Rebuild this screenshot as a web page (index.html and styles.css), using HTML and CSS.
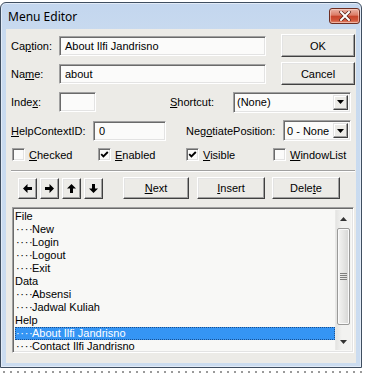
FILE: index.html
```html
<!DOCTYPE html>
<html>
<head>
<meta charset="utf-8">
<link rel="stylesheet" href="styles.css">
</head>
<body>
<div class="win">
  <div class="titlebar">
    <span class="title">Menu Editor</span>
    <span class="close"><svg width="12" height="10" viewBox="0 0 12 10"><path d="M2 1 L10 9 M10 1 L2 9" stroke="#5a2216" stroke-width="3.4" stroke-linecap="square"/><path d="M2 1 L10 9 M10 1 L2 9" stroke="#fff" stroke-width="2" stroke-linecap="square"/></svg></span>
  </div>
  <div class="client">
    <div class="row r1">
      <span class="lbl w53">Ca<u>p</u>tion:</span>
      <div class="tb tb-long">About Ilfi Jandrisno</div>
      <div class="btn btn-side">OK</div>
    </div>
    <div class="row r2">
      <span class="lbl w53">Na<u>m</u>e:</span>
      <div class="tb tb-long">about</div>
      <div class="btn btn-side">Cancel</div>
    </div>
    <div class="row r3">
      <span class="lbl w53">Inde<u>x</u>:</span>
      <div class="tb tb-index"></div>
      <span class="lbl shortcut-lbl"><u>S</u>hortcut:</span>
      <div class="combo combo-short"><span class="combo-text">(None)</span><span class="drop"><svg width="7" height="4" viewBox="0 0 7 4"><path d="M0 0 H7 L3.5 4 Z" fill="#000"/></svg></span></div>
    </div>
    <div class="row r4">
      <span class="lbl w87"><u>H</u>elpContextID:</span>
      <div class="tb tb-help">0</div>
      <span class="lbl neg-lbl">Neg<u>o</u>tiatePosition:</span>
      <div class="combo combo-neg"><span class="combo-text">0 - None</span><span class="drop"><svg width="7" height="4" viewBox="0 0 7 4"><path d="M0 0 H7 L3.5 4 Z" fill="#000"/></svg></span></div>
    </div>
    <div class="row r5">
      <label class="chk g1"><span class="box"></span><span><u>C</u>hecked</span></label>
      <label class="chk g2"><span class="box"><svg width="9" height="9" viewBox="0 0 9 9"><path d="M1.2 4.2 L3.4 6.4 L7.8 2" stroke="#000" stroke-width="1.9" fill="none"/></svg></span><span><u>E</u>nabled</span></label>
      <label class="chk g3"><span class="box"><svg width="9" height="9" viewBox="0 0 9 9"><path d="M1.2 4.2 L3.4 6.4 L7.8 2" stroke="#000" stroke-width="1.9" fill="none"/></svg></span><span><u>V</u>isible</span></label>
      <label class="chk g4"><span class="box"></span><span><u>W</u>indowList</span></label>
    </div>
    <div class="sep"></div>
    <div class="row r6">
      <div class="btn abtn"><svg width="9" height="9" viewBox="0 0 9 9"><path d="M0 4.5 L4.5 0 V3 H9 V6 H4.5 V9 Z" fill="#000"/></svg></div>
      <div class="btn abtn"><svg width="9" height="9" viewBox="0 0 9 9"><path d="M9 4.5 L4.5 0 V3 H0 V6 H4.5 V9 Z" fill="#000"/></svg></div>
      <div class="btn abtn"><svg width="9" height="9" viewBox="0 0 9 9"><path d="M4.5 0 L0 4.5 H3 V9 H6 V4.5 H9 Z" fill="#000"/></svg></div>
      <div class="btn abtn"><svg width="9" height="9" viewBox="0 0 9 9"><path d="M4.5 9 L0 4.5 H3 V0 H6 V4.5 H9 Z" fill="#000"/></svg></div>
      <div class="btn btn-next"><u>N</u>ext</div>
      <div class="btn btn-ins"><u>I</u>nsert</div>
      <div class="btn btn-del">Dele<u>t</u>e</div>
    </div>
    <div class="list">
      <div class="items">
        <div class="item">File</div>
        <div class="item"><span class="ind">····</span><span>New</span></div>
        <div class="item"><span class="ind">····</span><span>Login</span></div>
        <div class="item"><span class="ind">····</span><span>Logout</span></div>
        <div class="item"><span class="ind">····</span><span>Exit</span></div>
        <div class="item">Data</div>
        <div class="item"><span class="ind">····</span><span>Absensi</span></div>
        <div class="item"><span class="ind">····</span><span>Jadwal Kuliah</span></div>
        <div class="item">Help</div>
        <div class="item sel"><span class="ind">····</span><span>About Ilfi Jandrisno</span></div>
        <div class="item"><span class="ind">····</span><span>Contact Ilfi Jandrisno</span></div>
      </div>
      <div class="sbar">
        <div class="sarrow"><svg width="7" height="4" viewBox="0 0 7 4"><path d="M0 4 H7 L3.5 0 Z" fill="#333"/></svg></div>
        <div class="strack">
          <div class="thumb"><span class="grip"></span><span class="grip"></span><span class="grip"></span><span class="grip"></span></div>
        </div>
        <div class="sarrow"><svg width="7" height="4" viewBox="0 0 7 4"><path d="M0 0 H7 L3.5 4 Z" fill="#333"/></svg></div>
      </div>
    </div>
  </div>
</div>
<div class="dots"></div>
</body>
</html>
```

FILE: styles.css
```css
* { box-sizing: border-box; }
html, body { margin: 0; padding: 0; background: #fff; }
body {
  width: 367px;
  height: 374px;
  overflow: hidden;
  font-family: "Liberation Sans", Arial, sans-serif;
  font-size: 11px;
  color: #000;
}
u { text-decoration: underline; text-underline-offset: 1px; }

.win {
  margin-top: 2px;
  width: 362px;
  height: 366px;
  border: 1px solid #3f4e60;
  border-radius: 6px 6px 0 0;
  background: linear-gradient(#c3d6ee, #c8daef 30px, #cbdcf0);
  display: flex;
  flex-direction: column;
  box-shadow: inset 0 0 0 1px #e2ebf7;
}
.titlebar {
  height: 26px;
  display: flex;
  align-items: flex-start;
  padding-left: 7px;
}
.title {
  font-family: "Noto Sans", "Liberation Sans", sans-serif;
  font-size: 12px;
  margin-top: 5px;
  color: #000;
}
.close {
  margin-left: auto;
  margin-right: 1px;
  margin-top: 5px;
  width: 31px;
  height: 16px;
  border: 1px solid #6e2e22;
  border-radius: 3px;
  background: linear-gradient(#eab3a6, #dc7a64 45%, #c7422a 50%, #d0553a 80%, #e48b70);
  box-shadow: inset 0 0 0 1px rgba(255, 220, 210, 0.55);
  display: flex;
  align-items: center;
  justify-content: center;
}
.client {
  margin: 0 5px 4px 5px;
  flex: 1;
  background: #ecebe7;
  display: flex;
  flex-direction: column;
}

.row { display: flex; align-items: center; flex: none; }
.r1 { margin-top: 5px; height: 23px; }
.r2 { margin-top: 5px; height: 23px; }
.r3 { margin-top: 6px; height: 22px; }
.r4 { margin-top: 7px; height: 21px; }
.r5 { margin-top: 7px; height: 13px; }
.r6 { margin-top: 5px; height: 22px; }

.lbl { white-space: nowrap; flex: none; }
.w53 { width: 53px; padding-left: 5px; }
.w87 { width: 87px; padding-left: 5px; }
.shortcut-lbl { margin-left: 74px; width: 63px; }
.neg-lbl { margin-left: 20px; width: 97px; }

.tb {
  flex: none;
  height: 20px;
  background: #fbfbfa;
  border: 1px solid;
  border-color: #a0a0a0 #ffffff #ffffff #a0a0a0;
  box-shadow: inset 1px 1px 0 #6a6a6a, inset -1px -1px 0 #e3e3e3;
  padding: 0 4px 0 5px;
  display: flex;
  align-items: center;
  white-space: nowrap;
}
.tb-long { width: 207px; }
.tb-index { width: 37px; }
.tb-help { width: 73px; }

.btn {
  flex: none;
  background: #ecebe7;
  border: 1px solid;
  border-color: #ffffff #404040 #404040 #ffffff;
  box-shadow: inset -1px -1px 0 #a0a0a0, inset 1px 1px 0 #e3e3e3;
  display: flex;
  align-items: center;
  justify-content: center;
  white-space: nowrap;
}
.btn-side { width: 74px; height: 23px; margin-left: 15px; }
.abtn { width: 19px; height: 21px; margin-right: 3px; }
.abtn:first-child { margin-left: 12px; }
.btn-next { width: 66px; height: 22px; margin-left: 17px; }
.btn-ins { width: 68px; height: 22px; margin-left: 8px; }
.btn-del { width: 68px; height: 22px; margin-left: 7px; }

.combo {
  flex: none;
  height: 21px;
  background: #fbfbfa;
  border: 1px solid;
  border-color: #a0a0a0 #ffffff #ffffff #a0a0a0;
  box-shadow: inset 1px 1px 0 #6a6a6a, inset -1px -1px 0 #e3e3e3;
  display: flex;
  align-items: stretch;
  padding: 2px;
}
.combo-short { width: 118px; }
.combo-neg { width: 68px; }
.combo-text { flex: 1; min-width: 0; display: flex; align-items: center; padding-left: 1px; white-space: nowrap; }
.drop {
  width: 15px;
  flex: none;
  background: #ecebe7;
  border: 1px solid;
  border-color: #e3e3e3 #404040 #404040 #e3e3e3;
  box-shadow: inset -1px -1px 0 #a0a0a0, inset 1px 1px 0 #ffffff;
  display: flex;
  align-items: center;
  justify-content: center;
}

.chk { display: flex; align-items: center; flex: none; white-space: nowrap; }
.g1 { margin-left: 6px; width: 86px; }
.g2 { width: 88px; }
.g3 { width: 87px; }
.g4 { width: 80px; }
.box {
  width: 13px;
  height: 13px;
  flex: none;
  margin-right: 4px;
  background: #fbfbfa;
  border: 1px solid;
  border-color: #a0a0a0 #ffffff #ffffff #a0a0a0;
  box-shadow: inset 1px 1px 0 #6a6a6a, inset -1px -1px 0 #e3e3e3;
  display: flex;
  align-items: center;
  justify-content: center;
}

.sep {
  flex: none;
  margin-top: 9px;
  margin-left: 5px;
  width: 344px;
  height: 2px;
  border-top: 1px solid #a0a0a0;
  border-bottom: 1px solid #ffffff;
}

.list {
  flex: none;
  margin-top: 8px;
  margin-left: 6px;
  width: 342px;
  height: 146px;
  background: #f8f8f6;
  border: 1px solid;
  border-color: #a0a0a0 #ffffff #ffffff #a0a0a0;
  box-shadow: inset 1px 1px 0 #6a6a6a, inset -1px -1px 0 #e3e3e3;
  padding: 2px;
  display: flex;
}
.items { flex: 1; }
.item {
  height: 13px;
  line-height: 13px;
  white-space: nowrap;
  display: flex;
}
.item.sel {
  background: #3595f4;
  color: #fff;
  outline: 1px dotted #1c4f8c;
  outline-offset: -1px;
}
.ind {
  flex: none;
  width: 17px;
  overflow: hidden;
  padding-left: 1px;
  letter-spacing: 0.7px;
}

.sbar {
  width: 16px;
  flex: none;
  display: flex;
  flex-direction: column;
  background: linear-gradient(to right, #e4e4e2, #f2f2f0 40%, #f2f2f0);
  border-left: 1px solid #e9e9e7;
}
.sarrow {
  height: 17px;
  flex: none;
  display: flex;
  align-items: center;
  justify-content: center;
}
.strack { flex: 1; padding: 1px 0; }
.thumb {
  height: 97px;
  margin: 0 1px;
  border: 1px solid #9a9a98;
  border-radius: 2px;
  background: linear-gradient(to right, #f4f4f2, #e6e6e4 50%, #d6d6d4);
  box-shadow: inset 0 0 0 1px #fafafa;
  display: flex;
  flex-direction: column;
  justify-content: center;
  align-items: center;
  gap: 1px;
}
.grip {
  width: 7px;
  height: 1px;
  background: #7f7f7d;
}

.dots {
  margin-top: 3px;
  height: 2px;
  background: repeating-linear-gradient(to right, transparent 0 3px, #9a9a9a 3px 5px, transparent 5px 7px);
}
```
